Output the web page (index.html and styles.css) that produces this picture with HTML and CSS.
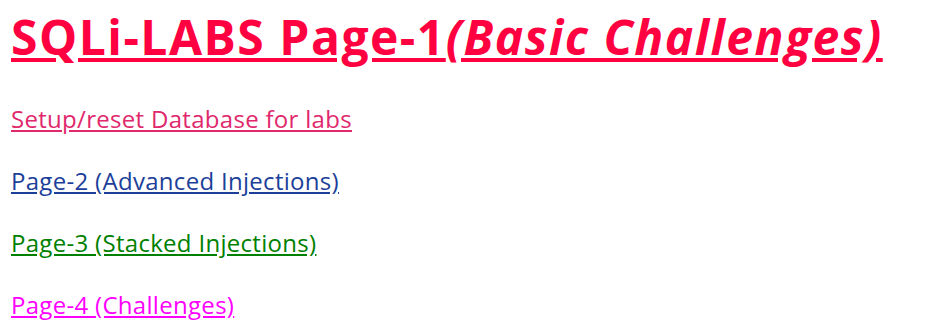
FILE: index.html
```html
<!DOCTYPE html>
<html lang="en">

<head>
  <meta charset="UTF-8" />
  <meta name="viewport" content="width=device-width, initial-scale=1.0" />
  <title>SQLi-LABS Page-1</title>
  <link rel="stylesheet" href="styles.css">
</head>

<body>
  <h1 class="title"><a href="#">SQLi-LABS Page-1<i>(Basic Challenges)</i></a></h1>

  <!-- Enlaces a las paginas -->
  <div class="links">
    <a class="link setup" href="#">Setup/reset Database for labs</a>
    <a class="link page2" href="#">Page-2 (Advanced Injections)</a>
    <a class="link page3" href="#">Page-3 (Stacked Injections)</a>
    <a class="link page4" href="#">Page-4 (Challenges)</a>
  </div>
</body>

</html>
```

FILE: styles.css
```css
:root {
  --title: #ff0040;
  --setup: #e0286c;
  --page2: #1c3f9a;
  --page3: #008000;
  --page4: #ff00ff;
}

html,
body {
  background: #ffffff;
  margin: 0;
  padding: 0;
}

body {
  padding: 0 11px;
  font-family: 'Open Sans', 'Noto Sans', sans-serif;
}

.title {
  margin: 5px 0 0;
  font-size: 48px;
  line-height: 64px;
  font-weight: 700;
  letter-spacing: 1.5px;
}

.title a {
  color: var(--title);
}

.links {
  display: flex;
  flex-direction: column;
  align-items: flex-start;
  gap: 30px;
  padding-top: 34px;
}

.link {
  font-size: 24px;
  line-height: 32px;
  letter-spacing: 0.3px;
}

.link.setup {
  color: var(--setup);
}

.link.page2 {
  color: var(--page2);
}

.link.page3 {
  color: var(--page3);
}

.link.page4 {
  color: var(--page4);
}
```
